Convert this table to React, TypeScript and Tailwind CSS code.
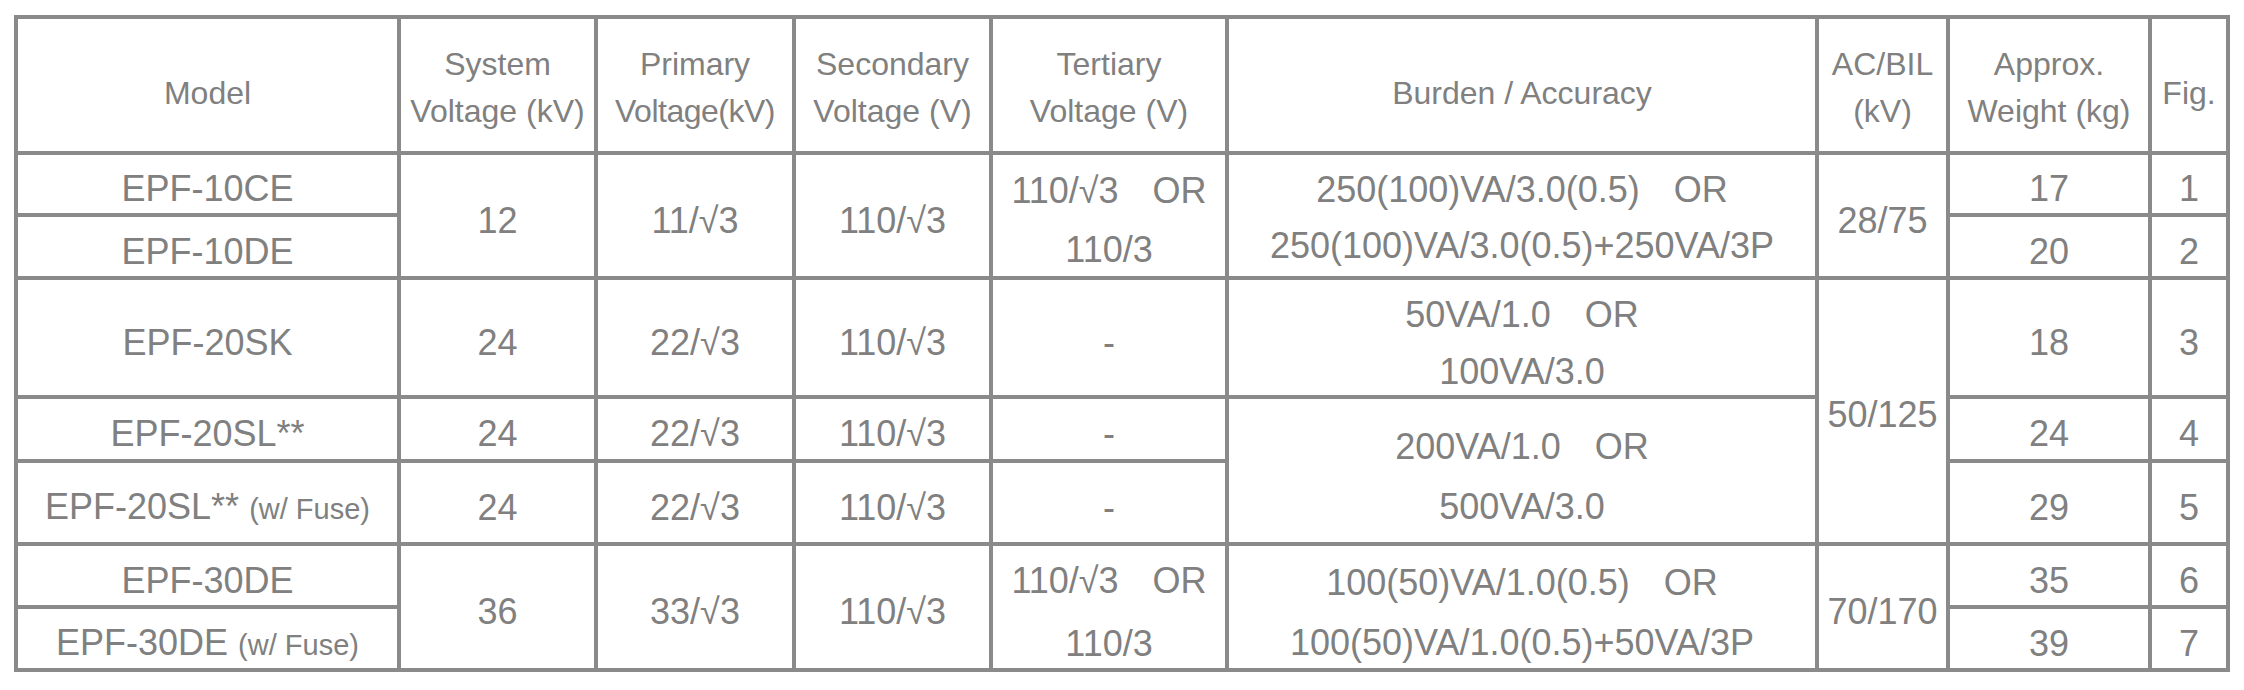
import React from "react";

type CellProps = {
  c: string;
  children?: React.ReactNode;
};

function Cell({ c, children }: CellProps) {
  return (
    <div className={"bg-white flex flex-col items-center justify-center text-center whitespace-nowrap " + c}>
      {children}
    </div>
  );
}

function Or({ a }: { a: string }) {
  return (
    <span>
      {a}
      <span className="ml-[34px]">OR</span>
    </span>
  );
}

export default function App() {
  return (
    <div className="w-[2244px] h-[690px] bg-white pt-[15px] pl-[14px]" style={{ fontFamily: '"Liberation Sans", Arial, sans-serif' }}>
      <div className="grid w-fit bg-[#8a8a8a] p-[4px] gap-[4px] text-[#808080] text-[36px] leading-[42px] grid-cols-[379px_193px_194px_193px_232px_586px_127px_198px_74px] grid-rows-[132px_58px_59px_115px_60px_79px_59px_59px]">
        {/* Header */}
        <Cell c="col-start-1 row-start-1 text-[32px] leading-[47px] pt-[16px]">Model</Cell>
        <Cell c="col-start-2 row-start-1 text-[32px] leading-[47px] pt-[6px]">
          <span>System</span>
          <span>Voltage (kV)</span>
        </Cell>
        <Cell c="col-start-3 row-start-1 text-[32px] leading-[47px] pt-[6px]">
          <span>Primary</span>
          <span className="tracking-[-0.5px]">Voltage(kV)</span>
        </Cell>
        <Cell c="col-start-4 row-start-1 text-[32px] leading-[47px] pt-[6px]">
          <span>Secondary</span>
          <span>Voltage (V)</span>
        </Cell>
        <Cell c="col-start-5 row-start-1 text-[32px] leading-[47px] pt-[6px]">
          <span>Tertiary</span>
          <span>Voltage (V)</span>
        </Cell>
        <Cell c="col-start-6 row-start-1 text-[32px] leading-[47px] pt-[16px]">Burden / Accuracy</Cell>
        <Cell c="col-start-7 row-start-1 text-[32px] leading-[47px] pt-[6px]">
          <span>AC/BIL</span>
          <span>(kV)</span>
        </Cell>
        <Cell c="col-start-8 row-start-1 text-[32px] leading-[47px] pt-[6px]">
          <span>Approx.</span>
          <span>Weight (kg)</span>
        </Cell>
        <Cell c="col-start-9 row-start-1 text-[32px] leading-[47px] pt-[16px]">Fig.</Cell>

        {/* Model column */}
        <Cell c="col-start-1 row-start-2 pt-[10px]">EPF-10CE</Cell>
        <Cell c="col-start-1 row-start-3 pt-[10px]">EPF-10DE</Cell>
        <Cell c="col-start-1 row-start-4 pt-[10px]">EPF-20SK</Cell>
        <Cell c="col-start-1 row-start-5 pt-[10px]">EPF-20SL**</Cell>
        <Cell c="col-start-1 row-start-6 pt-[10px]">
          <span>
            EPF-20SL** <span className="text-[29px]">(w/ Fuse)</span>
          </span>
        </Cell>
        <Cell c="col-start-1 row-start-7 pt-[10px]">EPF-30DE</Cell>
        <Cell c="col-start-1 row-start-8 pt-[10px]">
          <span>
            EPF-30DE <span className="text-[29px]">(w/ Fuse)</span>
          </span>
        </Cell>

        {/* System voltage */}
        <Cell c="col-start-2 row-start-2 row-span-2 pt-[10px]">12</Cell>
        <Cell c="col-start-2 row-start-4 pt-[10px]">24</Cell>
        <Cell c="col-start-2 row-start-5 pt-[10px]">24</Cell>
        <Cell c="col-start-2 row-start-6 pt-[10px]">24</Cell>
        <Cell c="col-start-2 row-start-7 row-span-2 pt-[10px]">36</Cell>

        {/* Primary voltage */}
        <Cell c="col-start-3 row-start-2 row-span-2 pt-[10px]">11/√3</Cell>
        <Cell c="col-start-3 row-start-4 pt-[10px]">22/√3</Cell>
        <Cell c="col-start-3 row-start-5 pt-[10px]">22/√3</Cell>
        <Cell c="col-start-3 row-start-6 pt-[10px]">22/√3</Cell>
        <Cell c="col-start-3 row-start-7 row-span-2 pt-[10px]">33/√3</Cell>

        {/* Secondary voltage */}
        <Cell c="col-start-4 row-start-2 row-span-2 pt-[10px]">110/√3</Cell>
        <Cell c="col-start-4 row-start-4 pt-[10px]">110/√3</Cell>
        <Cell c="col-start-4 row-start-5 pt-[10px]">110/√3</Cell>
        <Cell c="col-start-4 row-start-6 pt-[10px]">110/√3</Cell>
        <Cell c="col-start-4 row-start-7 row-span-2 pt-[10px]">110/√3</Cell>

        {/* Tertiary voltage */}
        <Cell c="col-start-5 row-start-2 row-span-2 leading-[59px] pt-[8px]">
          <Or a="110/√3" />
          <span>110/3</span>
        </Cell>
        <Cell c="col-start-5 row-start-4 pt-[10px]">-</Cell>
        <Cell c="col-start-5 row-start-5 pt-[10px]">-</Cell>
        <Cell c="col-start-5 row-start-6 pt-[10px]">-</Cell>
        <Cell c="col-start-5 row-start-7 row-span-2 leading-[63px] pt-[10px]">
          <Or a="110/√3" />
          <span>110/3</span>
        </Cell>

        {/* Burden / accuracy */}
        <Cell c="col-start-6 row-start-2 row-span-2 leading-[56px] pt-[4px]">
          <Or a="250(100)VA/3.0(0.5)" />
          <span>250(100)VA/3.0(0.5)+250VA/3P</span>
        </Cell>
        <Cell c="col-start-6 row-start-4 leading-[57px] pt-[10px]">
          <Or a="50VA/1.0" />
          <span>100VA/3.0</span>
        </Cell>
        <Cell c="col-start-6 row-start-5 row-span-2 leading-[60px] pt-[12px]">
          <Or a="200VA/1.0" />
          <span>500VA/3.0</span>
        </Cell>
        <Cell c="col-start-6 row-start-7 row-span-2 leading-[60px] pt-[11px]">
          <Or a="100(50)VA/1.0(0.5)" />
          <span>100(50)VA/1.0(0.5)+50VA/3P</span>
        </Cell>

        {/* AC/BIL */}
        <Cell c="col-start-7 row-start-2 row-span-2 pt-[10px]">28/75</Cell>
        <Cell c="col-start-7 row-start-4 row-span-3 pt-[8px]">50/125</Cell>
        <Cell c="col-start-7 row-start-7 row-span-2 pt-[10px]">70/170</Cell>

        {/* Weight */}
        <Cell c="col-start-8 row-start-2 pt-[10px]">17</Cell>
        <Cell c="col-start-8 row-start-3 pt-[10px]">20</Cell>
        <Cell c="col-start-8 row-start-4 pt-[10px]">18</Cell>
        <Cell c="col-start-8 row-start-5 pt-[10px]">24</Cell>
        <Cell c="col-start-8 row-start-6 pt-[10px]">29</Cell>
        <Cell c="col-start-8 row-start-7 pt-[10px]">35</Cell>
        <Cell c="col-start-8 row-start-8 pt-[10px]">39</Cell>

        {/* Fig */}
        <Cell c="col-start-9 row-start-2 pt-[10px]">1</Cell>
        <Cell c="col-start-9 row-start-3 pt-[10px]">2</Cell>
        <Cell c="col-start-9 row-start-4 pt-[10px]">3</Cell>
        <Cell c="col-start-9 row-start-5 pt-[10px]">4</Cell>
        <Cell c="col-start-9 row-start-6 pt-[10px]">5</Cell>
        <Cell c="col-start-9 row-start-7 pt-[10px]">6</Cell>
        <Cell c="col-start-9 row-start-8 pt-[10px]">7</Cell>
      </div>
    </div>
  );
}
